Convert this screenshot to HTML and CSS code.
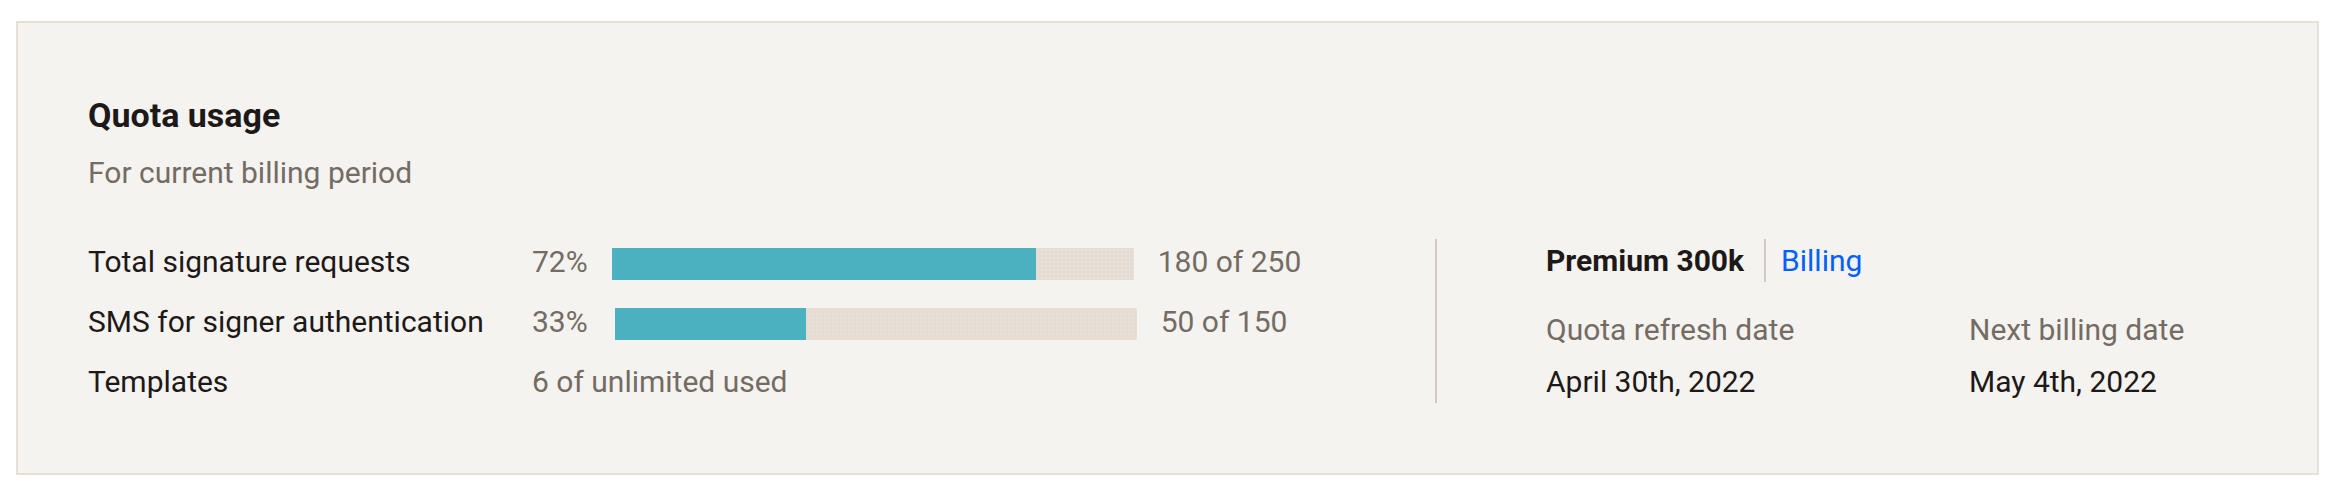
FILE: index.html
```html
<!DOCTYPE html>
<html lang="en">
<head>
  <meta charset="UTF-8">
  <title>Quota usage</title>
  <link rel="stylesheet" href="styles.css">
</head>
<body>
  <div class="card">
    <h2 class="card-title">Quota usage</h2>
    <p class="card-subtitle">For current billing period</p>

    <div class="quota">
      <div class="usage">
        <div class="usage-row">
          <span class="usage-label">Total signature requests</span>
          <span class="usage-pct">72%</span>
          <div class="bar"><div class="bar-fill" style="width: 81.2%"></div></div>
          <span class="usage-count">180 of 250</span>
        </div>
        <div class="usage-row">
          <span class="usage-label">SMS for signer authentication</span>
          <span class="usage-pct">33%</span>
          <div class="bar"><div class="bar-fill" style="width: 36.6%"></div></div>
          <span class="usage-count">50 of 150</span>
        </div>
        <div class="usage-row">
          <span class="usage-label">Templates</span>
          <span class="usage-count">6 of unlimited used</span>
        </div>
      </div>

      <div class="plan">
        <div class="plan-head">
          <span class="plan-name">Premium 300k</span>
          <a class="plan-link" href="#">Billing</a>
        </div>
        <div class="plan-dates">
          <div class="plan-date">
            <span class="date-label">Quota refresh date</span>
            <span class="date-value">April 30th, 2022</span>
          </div>
          <div class="plan-date">
            <span class="date-label">Next billing date</span>
            <span class="date-value">May 4th, 2022</span>
          </div>
        </div>
      </div>
    </div>
  </div>
</body>
</html>
```

FILE: styles.css
```css
body {
  margin: 21px 29px 22px 16px;
  background: #ffffff;
  font-family: Roboto, "Liberation Sans", sans-serif;
  font-size: 30px;
  line-height: 40px;
  color: #1e1919;
}

.card {
  background: #f5f3ef;
  border: 2px solid #e6e0d6;
  padding: 72px 0 70px 70px;
}

.card-title {
  margin: 0;
  font-size: 34px;
  line-height: 40px;
  font-weight: 700;
}

.card-subtitle {
  margin: 18px 0 0;
  color: #736c64;
}

.quota {
  display: flex;
  margin-top: 46px;
}

.usage {
  flex: 0 0 1347px;
  display: flex;
  flex-direction: column;
  gap: 20px;
  padding-top: 3px;
}

.usage-row {
  display: flex;
  align-items: flex-start;
  height: 40px;
}

.usage-label {
  flex: 0 0 444px;
}

.usage-pct,
.usage-count {
  color: #736c64;
}

.bar {
  width: 522px;
  height: 32px;
  margin: 6px 24px 0;
  background-color: #e5ddd3;
  background-image: radial-gradient(rgba(255, 255, 255, 0.12) 1px, transparent 1px);
  background-size: 4px 4px;
}

.usage-row:nth-child(2) .bar {
  margin-left: 27px;
}

.bar-fill {
  height: 100%;
  background: #4bb0c0;
}

.plan {
  flex: 1;
  border-left: 2px solid #cfc9c1;
  padding: 0 0 1px 109px;
}

.plan-head {
  display: flex;
  height: 43px;
  line-height: 43px;
}

.plan-name {
  font-weight: 700;
  padding-right: 20px;
  border-right: 2px solid #cfc9c1;
}

.plan-link {
  padding-left: 15px;
  color: #0061fe;
  text-decoration: none;
}

.plan-dates {
  display: grid;
  grid-template-columns: 423px 1fr;
  margin-top: 28px;
}

.plan-date {
  display: flex;
  flex-direction: column;
  gap: 12px;
}

.date-label {
  color: #736c64;
}
```
